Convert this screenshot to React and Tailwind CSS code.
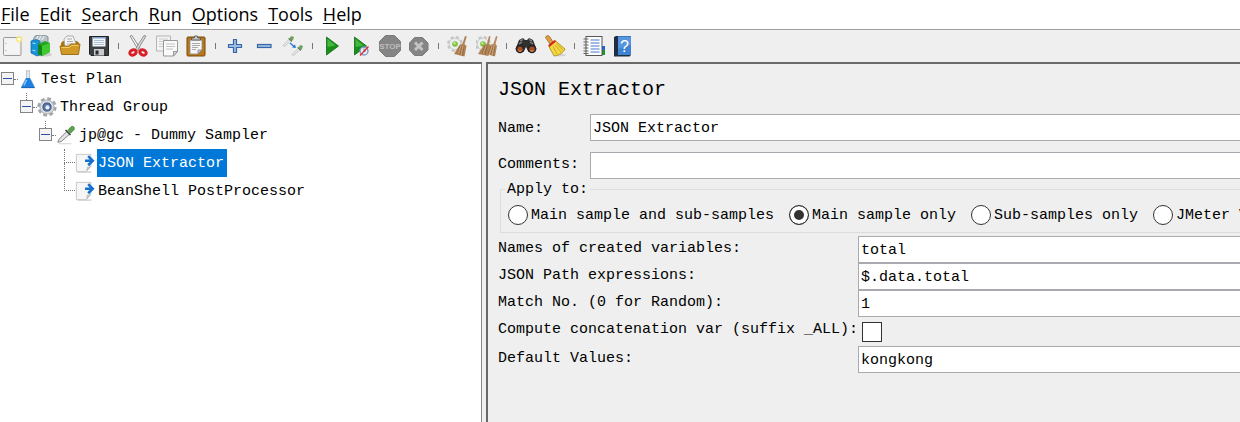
import { useState } from 'react';

const menus = ['File', 'Edit', 'Search', 'Run', 'Options', 'Tools', 'Help'];

function Icon({ children, size = 22 }) {
  return (
    <svg width={size} height={size} viewBox="0 0 22 22" fill="none" className="block shrink-0" aria-hidden="true">
      {children}
    </svg>
  );
}

const NewIcon = () => (
  <Icon>
    <rect x="2.5" y="2.5" width="17.5" height="18" rx="1" fill="#efefef" stroke="#9b9b98" />
    <path d="M4 4h14v15H4z" fill="#f4f4f4" />
    <path d="M5 8v1M5 15v1" stroke="#999" />
    <circle cx="18.2" cy="4.2" r="3.3" fill="#f7e873" opacity=".8" />
    <circle cx="18.2" cy="4.2" r="1.4" fill="#fff" />
  </Icon>
);

const TemplatesIcon = () => (
  <Icon>
    <ellipse cx="14" cy="19.5" rx="8" ry="2" fill="#cdcdcd" />
    <path d="M3 5l2-4 4-1 2 1 4-1 3 2v9H5z" fill="#b9c4c9" stroke="#6f7f86" strokeWidth=".8" />
    <path d="M6 5l2-4M9 5l2-4M12 5l2-4" stroke="#f5f5f5" />
    <path d="M1 6l5-1.5 4 1.5v14l-3 1-6-3z" fill="#1693d6" stroke="#0b6aa5" strokeWidth=".7" />
    <path d="M2.5 8l3 .7M2.5 15l3 1" stroke="#b6e3fa" />
    <path d="M8 9l7-3 5 2v9l-8 4-4-2z" fill="#27a428" />
    <path d="M12 11l8-3v9l-8 4z" fill="#3fc933" />
    <path d="M8 9l4 2v10l-4-2z" fill="#11851a" />
  </Icon>
);

const OpenIcon = () => (
  <Icon>
    <path d="M2 8l2-2h14l2 2v8H2z" fill="#a87513" />
    <path d="M5 4l3-3h6l4 10-12 3z" fill="#f5f5f5" stroke="#999" strokeWidth=".8" />
    <path d="M8 4h5M8 6.5h6M8 9h7" stroke="#aaa" />
    <path d="M1 11h9l2-2h9l-1.5 10.5h-17z" fill="#d19a27" stroke="#9a6a0c" strokeWidth=".9" />
    <path d="M2.5 12.5h8l2-2h7" stroke="#f2ca66" />
  </Icon>
);

const SaveIcon = () => (
  <Icon>
    <path d="M1.5 1.5h19v19H3l-1.5-1.5z" fill="#3c3f42" stroke="#222" />
    <path d="M4.5 2h13v9.5h-13z" fill="#f3f6f8" />
    <path d="M4.5 2h13v1.5h-13z" fill="#7aa3cf" />
    <path d="M6 5.5h10M6 7.5h10M6 9.5h10" stroke="#abc0d2" />
    <path d="M6 14h10v6.5H6z" fill="#c9cccf" />
    <path d="M7.5 15.500h3v4h-3z" fill="#26282a" />
  </Icon>
);

const CutIcon = () => (
  <Icon>
    <path d="M3 1l2-.5L14 15l-2 1z" fill="#f3f3f3" stroke="#858585" strokeWidth=".9" />
    <path d="M19 1l-2-.5L8 15l2 1z" fill="#dedede" stroke="#858585" strokeWidth=".9" />
    <ellipse cx="6" cy="17.5" rx="3.3" ry="2.5" stroke="#d81e26" strokeWidth="3" transform="rotate(-22 6 17.5)" />
    <ellipse cx="16" cy="17.5" rx="3.3" ry="2.5" stroke="#d81e26" strokeWidth="3" transform="rotate(22 16 17.5)" />
  </Icon>
);

const CopyIcon = () => (
  <Icon>
    <path d="M.5 1h14v15H.5z" fill="#f3f3f3" stroke="#b5b5b5" />
    <path d="M3 4h9M3 6.5h4M3 9h4M3 11.5h4" stroke="#ccc" />
    <path d="M7.5 5.500h14v11l-4 4.500h-10z" fill="#fafafa" stroke="#999" />
    <path d="M10 9h9M10 11.500h9M10 14h7" stroke="#c4c4c4" />
    <path d="M17.5 21v-4.500h4z" fill="#d4d4d4" stroke="#888" strokeWidth=".8" />
  </Icon>
);

const PasteIcon = () => (
  <Icon>
    <rect x="2" y="2" width="18" height="19" rx="1" fill="#b9771a" stroke="#7d4d07" />
    <path d="M5 5h12v10l-4 4H5z" fill="#f6f6f6" stroke="#8b8b8b" strokeWidth=".8" />
    <path d="M7 8.500h8M7 10.500h8M7 12.500h6M7 14.500h4" stroke="#aaa" />
    <path d="M13 19v-4h4z" fill="#c8c8c8" stroke="#777" strokeWidth=".7" />
    <path d="M6.500 5V3h2.500l.7-2h2.600l.7 2h2.500v2z" fill="#c6c8c6" stroke="#555" strokeWidth=".9" />
  </Icon>
);

const PlusIcon = () => (
  <Icon>
    <path d="M9.500 4.500h3v5h5v3h-5v5h-3v-5h-5v-3h5z" fill="#9dbce0" stroke="#3566a8" strokeWidth="1.200" strokeLinejoin="round" />
  </Icon>
);

const MinusIcon = () => (
  <Icon>
    <rect x="4.500" y="9.500" width="13.500" height="3" fill="#9dbce0" stroke="#3566a8" strokeWidth="1.200" />
  </Icon>
);

const ToggleIcon = () => (
  <Icon>
    <path d="M1 10.500l6-6 1.500 1.500-6 5.500z" fill="#eee" stroke="#b5b5b5" strokeWidth=".8" />
    <path d="M7 3.500l2.500-2.500 2.500 1-1 3-2 1.500z" fill="#6ba35f" />
    <path d="M6.500 3.500l3.500 3" stroke="#5a665a" />
    <path d="M10 19.500l6-6 1.500 1.500-6 5.500z" fill="#eee" stroke="#b5b5b5" strokeWidth=".8" />
    <path d="M16 12.500l2.500-2.500 2.500 1-1 3-2 1.500z" fill="#6ba35f" />
    <path d="M15.500 12.500l3.500 3" stroke="#5a665a" />
    <path d="M8 8l4 3.500" stroke="#2477d6" strokeWidth="1.300" />
    <path d="M14 13l-4-.5 3-3z" fill="#2477d6" />
  </Icon>
);

const StartIcon = () => (
  <Icon>
    <path d="M5.500 2l12 9-12 9z" fill="#169016" stroke="#116b11" strokeWidth=".8" />
    <path d="M6.500 4l8 6.500-8 1.500z" fill="#46b842" />
  </Icon>
);

const StartNoPausesIcon = () => (
  <Icon>
    <path d="M4.500 2l12 9-12 9z" fill="#169016" stroke="#116b11" strokeWidth=".8" />
    <path d="M5.500 4l8 6.500-8 1.500z" fill="#46b842" />
    <circle cx="14" cy="16" r="4" fill="#e8eef5" stroke="#7396bf" strokeWidth="1.300" />
    <path d="M14 13.500V16h2" stroke="#567" strokeWidth=".8" />
    <path d="M10 20.500l8.500-9" stroke="#df2828" strokeWidth="1.300" />
  </Icon>
);

const StopIcon = () => (
  <Icon>
    <path d="M6.500.5h9l6 6v9l-6 6h-9l-6-6v-9z" fill="#858585" stroke="#7b7b7b" />
    <text x="11" y="14" textAnchor="middle" fontSize="8" fontWeight="bold" fontFamily="Liberation Sans Narrow, Liberation Sans, sans-serif" fill="#bdbdbd">STOP</text>
  </Icon>
);

const ShutdownIcon = () => (
  <Icon>
    <path d="M6.500 2.500h8l5.500 5.500v7l-5.500 5.500h-8L1.500 15V8z" fill="#858585" stroke="#7b7b7b" />
    <path d="M7 7.500l7.500 7.500M14.500 7.500L7 15" stroke="#c4c4c4" strokeWidth="3" />
  </Icon>
);

const Gear = ({ x = 8, y = 9 }) => (
  <g transform={`translate(${x} ${y})`}>
    <circle r="6.500" stroke="#c3c7c8" strokeWidth="3" strokeDasharray="3 2.100" />
    <circle r="5.800" fill="#eceeee" stroke="#c3c7c8" strokeWidth=".8" />
    <circle r="2.800" fill="#7cc142" />
    <circle cx="-.5" cy="-.8" r="1.200" fill="#b9ea7d" />
  </g>
);

const ClearIcon = () => (
  <Icon>
    <Gear />
    <path d="M18 1l1.800.6L17.500 9l2 2-2 10.500L7 19l5.500-9 3-1.500z" fill="#b08355" />
    <path d="M13 11l-3 8M15 11l-2 9M17 11l-1.500 10" stroke="#8a6238" strokeWidth=".8" />
    <path d="M14 10.500l-3 8M16 11l-2 9" stroke="#d9b184" strokeWidth=".7" />
  </Icon>
);

const ClearAllIcon = () => (
  <Icon>
    <Gear x={7} />
    <path d="M13 1l1.500.5L13 9l1.500 2-2 10L2 19l6-9 3-1.500z" fill="#b08355" />
    <path d="M20 1l1.500.5L19.500 9l1.500 2-2 10.500L10 19l4.500-9 3-1.500z" fill="#b58a5d" />
    <path d="M9 11l-3 8M11 11l-2 9M15 11l-3 8M17 11l-2 9M19 11l-1.500 10" stroke="#8a6238" strokeWidth=".8" />
    <path d="M10 11l-3 8M16 11l-3 9M18 11l-2 9" stroke="#d9b184" strokeWidth=".7" />
  </Icon>
);

const SearchIcon = () => (
  <Icon>
    <path d="M4 5l4-2 2 2h2l2-2 4 2 3.500 9-8 3-2.500-5-2.500 5-8-3z" fill="#303030" />
    <path d="M5 6l3-1.500M17 6l-3-1.500M4 9l3-2M18 9l-3-2" stroke="#8f8f8f" strokeWidth="1.100" />
    <circle cx="5" cy="14" r="4.300" fill="#242424" />
    <circle cx="17" cy="14" r="4.300" fill="#242424" />
    <circle cx="5" cy="14.300" r="2.700" fill="#a34f22" />
    <circle cx="17" cy="14.300" r="2.700" fill="#a34f22" />
    <path d="M3.500 15.500a2 2 0 0 0 3 0M15.500 15.500a2 2 0 0 0 3 0" stroke="#e39a62" />
  </Icon>
);

const BroomIcon = () => (
  <Icon>
    <ellipse cx="15" cy="20" rx="7" ry="1.500" fill="#d4d4d4" />
    <path d="M1.500 2.500C2 .5 4.500 0 5.500 1.500L9 7 6 9z" fill="#e0a040" stroke="#9b6417" strokeWidth=".8" />
    <path d="M4.500 10.500l6.500-5 10 8.500c-1 3-6 6.500-10.500 7-2-3-4.500-7-6-10.500z" fill="#f4d944" stroke="#a98b12" strokeWidth=".9" />
    <path d="M4.500 10l6-5 1.500 1.500-6.500 5.500z" fill="#d92524" />
    <path d="M9 11.500l4 7.500M11 10l6 7M12.500 9l6.500 6" stroke="#c6a21d" strokeWidth=".9" />
  </Icon>
);

const FunctionsIcon = () => (
  <Icon>
    <path d="M17 11h5v4h-5z" fill="#1d66d9" />
    <path d="M17 15h5v5h-5z" fill="#159a2b" />
    <rect x="3" y="1.500" width="16" height="19" fill="#fdfdfd" stroke="#555" />
    <path d="M7.500 5h9M7.500 8h9M7.500 11h9M7.500 14h9M7.500 17h9" stroke="#4779cf" strokeWidth="1.200" />
    <path d="M.5 4h5M.5 7h5M.5 10h5M.5 13h5M.5 16h5M.5 18.500h5" stroke="#666" strokeWidth="1.200" />
  </Icon>
);

const HelpIcon = () => (
  <Icon>
    <path d="M2 2l2-1h15v19l-1.500 1.500H2z" fill="#1c2d46" />
    <path d="M6 1.500h13V20H6z" fill="#3e83d3" />
    <path d="M6 1.500h13v8L6 14z" fill="#5796df" />
    <text x="12.500" y="16.500" textAnchor="middle" fontSize="16" fontFamily="Liberation Sans, sans-serif" fill="#fff">?</text>
  </Icon>
);

const FlaskIcon = () => (
  <Icon size={20}>
    <path d="M8.500 2h5M9.500 2v7L4 19h14L12.500 9V2" fill="#e8eef2" stroke="#b0bcc4" />
    <path d="M9 10h4l5.500 10.500h-15z" fill="#1d7fe0" />
    <path d="M9.500 12l-3 6" stroke="#8cc6fb" strokeWidth="1.500" />
    <path d="M3.500 20.500h15" stroke="#1459a8" />
  </Icon>
);

const ThreadGroupIcon = () => (
  <Icon size={20}>
    <circle cx="11" cy="11" r="8.800" stroke="#a3a7ab" strokeWidth="3.600" strokeDasharray="4 2.911" />
    <circle cx="11" cy="11" r="7.800" fill="#d9dcdf" stroke="#a3a7ab" />
    <circle cx="11" cy="11" r="4.500" fill="#5673a8" stroke="#34507f" />
    <circle cx="11.500" cy="11.500" r="2.300" fill="#e9f0fa" />
  </Icon>
);

const SamplerIcon = () => (
  <Icon size={20}>
    <path d="M3 20.500h14" stroke="#dcdcdc" strokeWidth="1.500" />
    <path d="M2 19l1-3 9-9 3 3-9 8z" fill="#e3e5e5" stroke="#777" />
    <path d="M10.500 5.500l5.500 5.500" stroke="#444" strokeWidth="1.800" />
    <path d="M13 6l3.500-4c2-1.500 4.500.5 3.500 3l-4 4z" fill="#5aa64c" stroke="#2e6a25" strokeWidth=".7" />
  </Icon>
);

const PostProcessorIcon = () => (
  <Icon size={20}>
    <path d="M3 21h15" stroke="#cfcfcf" strokeWidth="1.500" />
    <path d="M1.500 1.500h16v13l-5 6h-11z" fill="#f6f6f6" stroke="#c4c4c4" />
    <path d="M12.500 20.500l.5-5 5-1z" fill="#bdbdbd" />
    <path d="M11 8.500h8M14.500 3.500l5 5-5 5" stroke="#1670d0" strokeWidth="2.800" />
  </Icon>
);

const toolbar = [
  [['New', NewIcon], ['Templates', TemplatesIcon], ['Open', OpenIcon], ['Save', SaveIcon]],
  [['Cut', CutIcon], ['Copy', CopyIcon], ['Paste', PasteIcon]],
  [['Expand All', PlusIcon], ['Collapse All', MinusIcon], ['Toggle', ToggleIcon]],
  [['Start', StartIcon], ['Start no pauses', StartNoPausesIcon], ['Stop', StopIcon], ['Shutdown', ShutdownIcon]],
  [['Clear', ClearIcon], ['Clear All', ClearAllIcon]],
  [['Search', SearchIcon], ['Reset Search', BroomIcon]],
  [['Function Helper', FunctionsIcon], ['Help', HelpIcon]],
];

const scopes = ['Main sample and sub-samples', 'Main sample only', 'Sub-samples only', 'JMeter Variable Name to use'];

function Handle({ root }) {
  return (
    <>
      <button aria-label="Collapse" className="w-[13px] h-7 shrink-0 flex flex-col items-center">
        <span className={root ? 'h-[7px]' : 'h-[7px] border-l border-dotted border-[#777]'} />
        <span className="w-[13px] h-[13px] shrink-0 flex items-center justify-center border border-[#848484] bg-[#f4f4f4]">
          <span className="w-[9px] h-px bg-[#2a4fa8]" />
        </span>
      </button>
      <span className="w-1 shrink-0 border-t border-dotted border-[#777]" />
    </>
  );
}

function Branch({ last }) {
  return (
    <span className="w-[11px] h-7 shrink-0">
      <span className="block h-[14px] border-l border-b border-dotted border-[#777]" />
      {!last && <span className="block h-[14px] border-l border-dotted border-[#777]" />}
    </span>
  );
}

function NodeLabel({ children, selected, onClick }) {
  return (
    <button
      onClick={onClick}
      className={`h-7 ml-0.5 pl-px pr-[3px] pt-0.5 whitespace-nowrap ${selected ? 'bg-[#0078d7] text-white' : 'text-black'}`}
    >
      {children}
    </button>
  );
}

function Field({ id, value, onChange }) {
  return (
    <input
      id={id}
      type="text"
      value={value}
      onChange={onChange}
      className="w-full min-w-0 h-[27px] pl-0.5 pt-0.5 bg-white border border-r-0 border-[#a9a9b0] rounded-none outline-none"
    />
  );
}

export default function App() {
  const [selected, setSelected] = useState('JSON Extractor');
  const [scope, setScope] = useState(1);
  const [concat, setConcat] = useState(false);
  const [form, setForm] = useState({
    name: 'JSON Extractor',
    comments: '',
    names: 'total',
    path: '$.data.total',
    match: '1',
    defaults: 'kongkong'
  });

  const field = (key) => ({
    id: key,
    value: form[key],
    onChange: (e) => setForm({ ...form, [key]: e.target.value })
  });

  return (
    <div className="min-h-screen flex flex-col bg-[#efefef] text-black text-[15px] leading-[18px] font-['Liberation_Mono',monospace] overflow-hidden">
      {/* Menu bar */}
      <nav className="h-[30px] pl-px flex items-center gap-[10px] bg-white border-b border-[#a0a0a0] text-[18px] font-['Open_Sans',sans-serif]">
        {menus.map(menu => (
          <button key={menu} className="leading-6 pb-0.5">
            <span className="underline underline-offset-2 decoration-1">{menu[0]}</span>{menu.slice(1)}
          </button>
        ))}
      </nav>

      {/* Toolbar */}
      <div className="h-8 pl-px flex items-center gap-[7px]">
        {toolbar.map((group, i) => (
          <div key={i} className="flex items-center gap-[7px]">
            {i > 0 && <span className="w-[3px] h-[6px] flex justify-center"><span className="w-px bg-[#777]" /></span>}
            {group.map(([label, Glyph]) => (
              <button key={label} aria-label={label}>
                <Glyph />
              </button>
            ))}
          </div>
        ))}
      </div>

      <div className="flex-1 flex gap-1">
        {/* Test plan tree */}
        <div className="w-[482px] shrink-0 pl-px pt-px bg-white border-t-2 border-r border-t-[#696969] border-r-[#828790]">
          <div className="flex items-center">
            <Handle root />
            <FlaskIcon />
            <NodeLabel selected={selected === 'Test Plan'} onClick={() => setSelected('Test Plan')}>Test Plan</NodeLabel>
          </div>
          <div className="flex items-center pl-[19px]">
            <Handle />
            <ThreadGroupIcon />
            <NodeLabel selected={selected === 'Thread Group'} onClick={() => setSelected('Thread Group')}>Thread Group</NodeLabel>
          </div>
          <div className="flex items-center pl-[38px]">
            <Handle />
            <SamplerIcon />
            <NodeLabel selected={selected === 'Sampler'} onClick={() => setSelected('Sampler')}>jp@gc - Dummy Sampler</NodeLabel>
          </div>
          {['JSON Extractor', 'BeanShell PostProcessor'].map((name, i) => (
            <div key={name} className="flex items-center pl-[63px]">
              <Branch last={i === 1} />
              <PostProcessorIcon />
              <NodeLabel selected={selected === name} onClick={() => setSelected(name)}>{name}</NodeLabel>
            </div>
          ))}
        </div>

        {/* Extractor settings */}
        <main className="flex-1 min-w-0 pl-[10px] pt-[10px] border-t-2 border-l-2 border-[#696969]">
          <h1 className="text-[20px] leading-8">JSON Extractor</h1>
          <div className="mt-2 flex items-center">
            <label htmlFor="name" className="w-[92px] shrink-0 pt-0.5">Name:</label>
            <Field {...field('name')} />
          </div>
          <div className="mt-[11px] flex items-center">
            <label htmlFor="comments" className="w-[92px] shrink-0 pb-0.5">Comments:</label>
            <Field {...field('comments')} />
          </div>

          <fieldset className="min-w-0 ml-0.5 pl-1 border border-r-0 border-[#dcdcdc]">
            <legend className="px-0.5 pt-0.5">Apply to:</legend>
            <div className="flex gap-[15px] pt-[6px] pb-[7px] pl-[3px] overflow-hidden">
              {scopes.map((label, i) => (
                <label key={label} className="flex items-center gap-[3px] shrink-0 whitespace-nowrap">
                  <input
                    type="radio"
                    name="scope"
                    checked={scope === i}
                    onChange={() => setScope(i)}
                    className="appearance-none w-5 h-5 rounded-full border border-[#333] bg-white checked:bg-[#333] checked:shadow-[inset_0_0_0_4px_white]"
                  />
                  <span className="pt-0.5">{label}</span>
                </label>
              ))}
            </div>
          </fieldset>

          <div className="mt-[3px] grid grid-cols-[360px_1fr] items-center">
            <label htmlFor="names" className="pb-0.5">Names of created variables:</label>
            <Field {...field('names')} />
            <label htmlFor="path" className="pb-0.5">JSON Path expressions:</label>
            <Field {...field('path')} />
            <label htmlFor="match" className="pb-0.5">Match No. (0 for Random):</label>
            <Field {...field('match')} />
            <label htmlFor="concat" className="pb-1 whitespace-nowrap">Compute concatenation var (suffix _ALL):</label>
            <div className="h-[29px] pl-1 flex items-center">
              <input
                id="concat"
                type="checkbox"
                checked={concat}
                onChange={() => setConcat(!concat)}
                className="appearance-none w-5 h-5 border border-[#333] bg-white checked:bg-[#333] checked:shadow-[inset_0_0_0_4px_white]"
              />
            </div>
            <label htmlFor="defaults" className="pb-0.5">Default Values:</label>
            <Field {...field('defaults')} />
          </div>
        </main>
      </div>
    </div>
  );
}
